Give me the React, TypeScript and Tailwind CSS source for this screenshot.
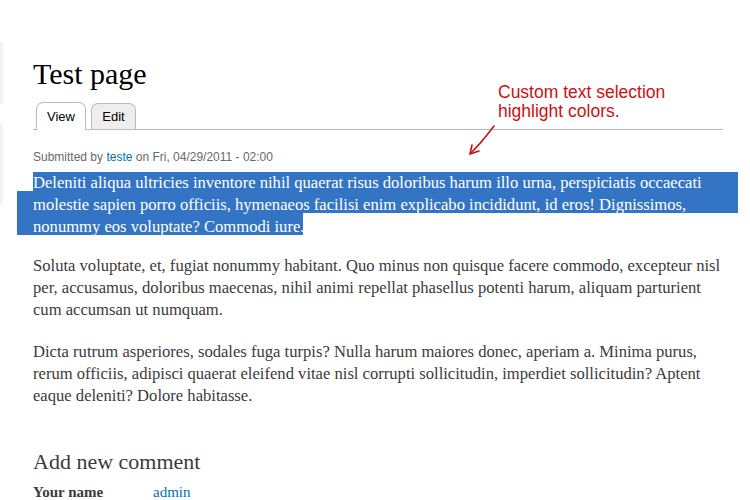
import React from "react";

const serif = { fontFamily: '"Liberation Serif", Georgia, serif' };
const sans = { fontFamily: '"Liberation Sans", Arial, sans-serif' };

const selected = [
  "Deleniti aliqua ultricies inventore nihil quaerat risus doloribus harum illo urna, perspiciatis occaecati",
  "molestie sapien porro officiis, hymenaeos facilisi enim explicabo incididunt, id eros! Dignissimos,",
  "nonummy eos voluptate? Commodi iure.",
];

const paragraphs = [
  [
    "Soluta voluptate, et, fugiat nonummy habitant. Quo minus non quisque facere commodo, excepteur nisl",
    "per, accusamus, doloribus maecenas, nihil animi repellat phasellus potenti harum, aliquam parturient",
    "cum accumsan ut numquam.",
  ],
  [
    "Dicta rutrum asperiores, sodales fuga turpis? Nulla harum maiores donec, aperiam a. Minima purus,",
    "rerum officiis, adipisci quaerat eleifend vitae nisl corrupti sollicitudin, imperdiet sollicitudin? Aptent",
    "eaque deleniti? Dolore habitasse.",
  ],
];

const App = () => {
  return (
    <div className="relative flex w-[750px] h-[500px] overflow-hidden bg-white">
      {/* faint sidebar edge */}
      <div className="w-[3px] shrink-0 pt-[42px]">
        <div className="h-[62px] bg-[#f2f2ee]" />
        <div className="h-[80px] mt-[20px] bg-[#f2f2ee]" />
      </div>

      <div className="pl-[30px] w-[720px]">
        <h1 className="mt-[56px] text-[30px] leading-[36px] text-black" style={serif}>
          Test page
        </h1>

        {/* tabs */}
        <div className="flex gap-[5px] pl-[3px] mt-[10px] w-[690px] border-b border-[#bbbbbb]" style={sans}>
          <div className="-mb-px h-[28px] w-[50px] flex items-center justify-center rounded-t-[7px] border border-b-0 border-[#bbbbbb] bg-white text-[13px] text-black">
            View
          </div>
          <div className="h-[26px] mt-[1px] w-[45px] flex items-center justify-center rounded-t-[7px] border border-b-0 border-[#bbbbbb] bg-[#eeeeee] text-[13px] text-black">
            Edit
          </div>
        </div>

        <div className="mt-[20px] text-[12px] leading-[14px] text-[#68696b]" style={sans}>
          Submitted by <span className="text-[#0071b3]">teste</span> on Fri, 04/29/2011 - 02:00
        </div>

        {/* selected paragraph */}
        <div className="mt-[8px] text-[16.6px] text-white whitespace-nowrap" style={serif}>
          <div className="h-[19px] w-[705px] leading-[22px] bg-[#3474c5]">{selected[0]}</div>
          <div className="h-[22px] w-[721px] -ml-[16px] pl-[16px] pt-[3px] leading-[22px] bg-[#3474c5]">{selected[1]}</div>
          <div className="h-[22px] w-[286px] -ml-[16px] pl-[16px] pt-[3px] leading-[22px] bg-[#3474c5]">{selected[2]}</div>
        </div>

        {paragraphs.map((lines, i) => (
          <p key={i} className="mt-[20px] text-[16.6px] leading-[22px] text-[#3b3b3b] whitespace-nowrap" style={serif}>
            {lines.map((line, j) => (
              <span key={j} className="block">{line}</span>
            ))}
          </p>
        ))}

        <h2 className="mt-[42px] text-[22px] leading-[26px] text-[#3b3b3b]" style={serif}>
          Add new comment
        </h2>

        <div className="flex mt-[8px] text-[15px] leading-[18px]" style={serif}>
          <span className="w-[120px] font-bold text-[#3b3b3b]">Your name</span>
          <span className="text-[#0071b3]">admin</span>
        </div>
      </div>

      {/* annotation */}
      <div className="absolute left-[498px] top-[83px] text-[17.5px] leading-[19px] text-[#cc1111]" style={sans}>
        Custom text selection
        <br />
        highlight colors.
      </div>
      <svg className="absolute left-[460px] top-[120px]" width="40" height="40" viewBox="0 0 40 40" fill="none">
        <path d="M34 6 C 28 14, 16 28, 10 34" stroke="#cc1111" strokeWidth="1.6" strokeLinecap="round" />
        <path d="M10 34 L 12 25 M10 34 L 19 31" stroke="#cc1111" strokeWidth="1.6" strokeLinecap="round" />
      </svg>
    </div>
  );
};

export default App;
